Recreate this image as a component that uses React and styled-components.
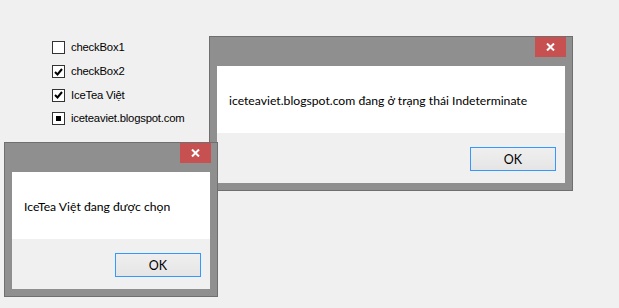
import React from "react";
import styled, { createGlobalStyle } from "styled-components";

const GlobalStyle = createGlobalStyle`
  html, body { margin: 0; padding: 0; background: #f0f0f0; }
  * { box-sizing: border-box; }
`;

const Desktop = styled.div`
  position: relative;
  width: 619px;
  height: 308px;
  overflow: hidden;
  background: #f0f0f0;
  padding: 36px 0 0 52px;
`;

const CheckList = styled.div`
  display: flex;
  flex-direction: column;
`;

const CheckRow = styled.label`
  display: flex;
  align-items: center;
  height: 23.7px;
  gap: 6px;
  font-family: "Liberation Sans", Arial, sans-serif;
  font-size: 11.3px;
  color: #000;
`;

const Box = styled.span`
  width: 13px;
  height: 13px;
  border: 1px solid #333;
  background: #fff;
  display: flex;
  align-items: center;
  justify-content: center;
`;

const Label = styled.span`
  line-height: 13px;
  letter-spacing: -0.2px;
`;

const IndeterminateDot = styled.span`
  width: 5px;
  height: 5px;
  background: #000;
`;

// dialogs sit on the desktop like windows
const Window = styled.div`
  position: absolute;
  left: ${(p) => p.$x}px;
  top: ${(p) => p.$y}px;
  width: ${(p) => p.$w}px;
  border: 1px solid #6f6f6f;
  background: #8f8f8f;
  padding: 0 7px 7px 7px;
  display: flex;
  flex-direction: column;
  z-index: ${(p) => p.$z || 1};
`;

const TitleBar = styled.div`
  height: 29px;
  display: flex;
  justify-content: flex-end;
  align-items: flex-start;
  margin-right: -1px;
`;

const CloseButton = styled.div`
  width: 31px;
  height: 20px;
  background: #c75050;
  display: flex;
  align-items: center;
  justify-content: center;
`;

const Message = styled.div`
  height: 67px;
  background: #fff;
  display: flex;
  align-items: center;
  padding: 1px 0 0 12px;
  font-family: Lato, "Noto Sans", sans-serif;
  font-size: 12.2px;
  color: #000;
`;

const ButtonPanel = styled.div`
  height: 50px;
  background: #f0f0f0;
  display: flex;
  justify-content: flex-end;
  align-items: flex-start;
  padding: 14px 9px 0 0;
`;

const OkButton = styled.div`
  width: 86px;
  height: 24px;
  border: 1px solid #3399ff;
  background: linear-gradient(#efefef, #e5e5e5);
  display: flex;
  align-items: center;
  justify-content: center;
  font-family: Lato, "Noto Sans", sans-serif;
  font-size: 12.5px;
  color: #000;
`;

const CheckMark = () => (
  <svg width="9" height="8" viewBox="0 0 9 8">
    <path d="M1 4 L3.5 6.5 L8 1" fill="none" stroke="#000" strokeWidth="2" />
  </svg>
);

const CloseIcon = () => (
  <svg width="9" height="8" viewBox="0 0 9 8">
    <path d="M1 0.5 L8 7.5 M8 0.5 L1 7.5" stroke="#fff" strokeWidth="2" />
  </svg>
);

const items = [
  { label: "checkBox1", state: "off" },
  { label: "checkBox2", state: "on" },
  { label: "IceTea Việt", state: "on" },
  { label: "iceteaviet.blogspot.com", state: "mixed" },
];

function Dialog({ x, y, w, z, text }) {
  return (
    <Window $x={x} $y={y} $w={w} $z={z}>
      <TitleBar>
        <CloseButton>
          <CloseIcon />
        </CloseButton>
      </TitleBar>
      <Message>{text}</Message>
      <ButtonPanel>
        <OkButton>OK</OkButton>
      </ButtonPanel>
    </Window>
  );
}

export default function App() {
  return (
    <>
      <GlobalStyle />
      <Desktop>
        <CheckList>
          {items.map((it) => (
            <CheckRow key={it.label}>
              <Box>
                {it.state === "on" && <CheckMark />}
                {it.state === "mixed" && <IndeterminateDot />}
              </Box>
              <Label>{it.label}</Label>
            </CheckRow>
          ))}
        </CheckList>
        <Dialog
          x={209}
          y={36}
          w={364}
          z={1}
          text="iceteaviet.blogspot.com đang ở trạng thái Indeterminate"
        />
        <Dialog x={4} y={142} w={214} z={2} text="IceTea Việt đang được chọn" />
      </Desktop>
    </>
  );
}
